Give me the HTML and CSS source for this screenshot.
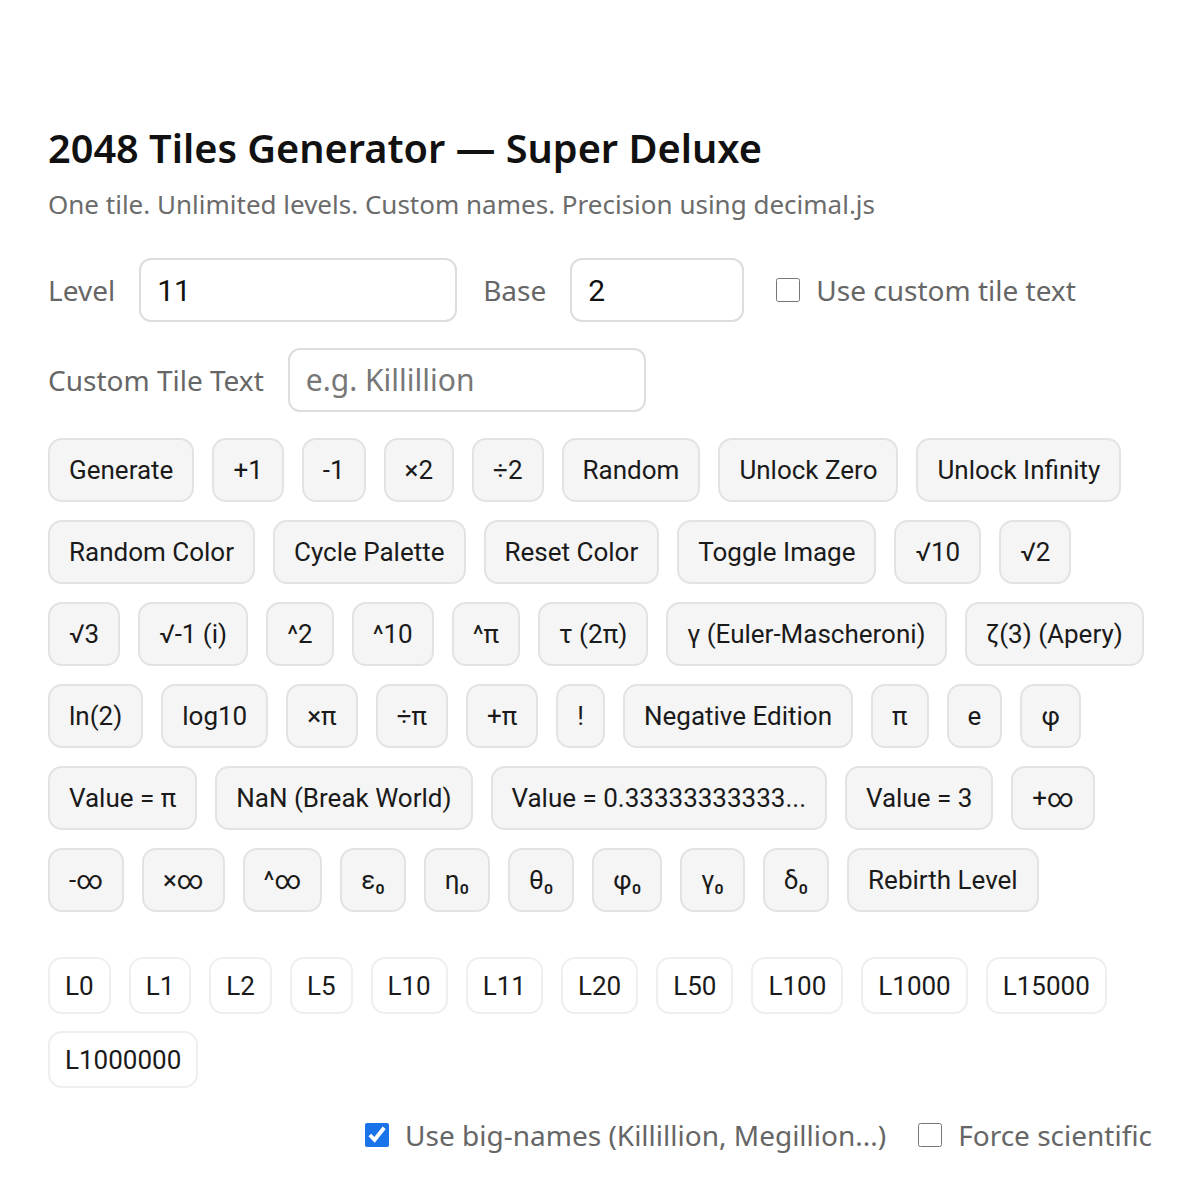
FILE: index.html
```html
<!DOCTYPE html>
<html lang="en">
<head>
    <meta charset="UTF-8">
    <meta name="viewport" content="width=device-width, initial-scale=1.0">
    <title>2048 Tiles Generator — Super Deluxe</title>
    <link rel="stylesheet" href="styles.css">
</head>
<body>
    <div class="app">
        <h1>2048 Tiles Generator — Super Deluxe</h1>
        <p class="subtitle">One tile. Unlimited levels. Custom names. Precision using decimal.js</p>

        <div class="field-row">
            <label class="label" for="level">Level</label>
            <input class="input input-level" id="level" type="text" value="11">
            <label class="label label-base" for="base">Base</label>
            <input class="input input-base" id="base" type="text" value="2">
            <label class="check check-custom"><input type="checkbox"> Use custom tile text</label>
        </div>

        <div class="field-row">
            <label class="label" for="custom">Custom Tile Text</label>
            <input class="input input-custom" id="custom" type="text" placeholder="e.g. Killillion">
        </div>

        <div class="actions">
            <div class="btn-row">
                <button class="button">Generate</button>
                <button class="button">+1</button>
                <button class="button">-1</button>
                <button class="button">×2</button>
                <button class="button">÷2</button>
                <button class="button">Random</button>
                <button class="button">Unlock Zero</button>
                <button class="button">Unlock Infinity</button>
            </div>
            <div class="btn-row">
                <button class="button">Random Color</button>
                <button class="button">Cycle Palette</button>
                <button class="button">Reset Color</button>
                <button class="button">Toggle Image</button>
                <button class="button">√10</button>
                <button class="button">√2</button>
            </div>
            <div class="btn-row">
                <button class="button">√3</button>
                <button class="button">√-1 (i)</button>
                <button class="button">^2</button>
                <button class="button">^10</button>
                <button class="button">^π</button>
                <button class="button">τ (2π)</button>
                <button class="button">γ (Euler-Mascheroni)</button>
                <button class="button">ζ(3) (Apery)</button>
            </div>
            <div class="btn-row">
                <button class="button">ln(2)</button>
                <button class="button">log10</button>
                <button class="button">×π</button>
                <button class="button">÷π</button>
                <button class="button">+π</button>
                <button class="button">!</button>
                <button class="button">Negative Edition</button>
                <button class="button">π</button>
                <button class="button">e</button>
                <button class="button">φ</button>
            </div>
            <div class="btn-row">
                <button class="button">Value = π</button>
                <button class="button">NaN (Break World)</button>
                <button class="button">Value = 0.33333333333...</button>
                <button class="button">Value = 3</button>
                <button class="button">+∞</button>
            </div>
            <div class="btn-row">
                <button class="button">-∞</button>
                <button class="button">×∞</button>
                <button class="button">^∞</button>
                <button class="button">ε₀</button>
                <button class="button">η₀</button>
                <button class="button">θ₀</button>
                <button class="button">φ₀</button>
                <button class="button">γ₀</button>
                <button class="button">δ₀</button>
                <button class="button">Rebirth Level</button>
            </div>
        </div>

        <div class="levels">
            <button class="level-btn">L0</button>
            <button class="level-btn">L1</button>
            <button class="level-btn">L2</button>
            <button class="level-btn">L5</button>
            <button class="level-btn">L10</button>
            <button class="level-btn">L11</button>
            <button class="level-btn">L20</button>
            <button class="level-btn">L50</button>
            <button class="level-btn">L100</button>
            <button class="level-btn">L1000</button>
            <button class="level-btn">L15000</button>
            <button class="level-btn">L1000000</button>
        </div>

        <div class="options">
            <label class="check"><input type="checkbox" checked> Use big-names (Killillion, Megillion...)</label>
            <label class="check"><input type="checkbox"> Force scientific</label>
        </div>
    </div>
</body>
</html>
```

FILE: styles.css
```css
body {
    font-family: 'Noto Sans', 'Open Sans', sans-serif;
    margin: 0;
    padding: 0;
    background: #fff;
    color: #111;
}
.app {
    padding: 112px 48px 40px;
}
h1 {
    font-size: 39.7px;
    font-weight: 600;
    margin: 0;
    line-height: 72px;
    color: #111;
}
.subtitle {
    color: #6b6b6b;
    font-size: 26px;
    margin: 2px 0 36px;
    line-height: 36px;
}
.field-row {
    display: flex;
    align-items: center;
    gap: 24px;
    margin-bottom: 26px;
}
.label {
    color: #666;
    font-size: 28px;
}
.label-base {
    margin-left: 2px;
}
.input {
    box-sizing: border-box;
    height: 64px;
    border: 2px solid #ddd;
    border-radius: 12px;
    padding: 0 16px;
    font-family: Roboto, sans-serif;
    font-size: 30px;
    color: #111;
    outline: none;
}
.input::placeholder {
    font-family: 'Noto Sans', sans-serif;
    color: #777;
}
.input-level { width: 318px; }
.input-base { width: 174px; }
.input-custom { width: 358px; }
.check {
    display: flex;
    align-items: center;
    gap: 16px;
    color: #666;
    font-size: 28px;
    white-space: nowrap;
}
.check-custom {
    margin-left: 8px;
}
.check input {
    width: 24px;
    height: 24px;
    margin: 0;
    accent-color: #1a73e8;
}
.actions {
    display: flex;
    flex-direction: column;
    gap: 18px;
}
.btn-row {
    display: flex;
    gap: 18px;
}
.button {
    font-family: Roboto, sans-serif;
    font-size: 26px;
    line-height: 30px;
    color: #1a1a1a;
    background: #f5f5f5;
    border: 2px solid #e3e3e3;
    border-radius: 14px;
    padding: 15px 19px;
    white-space: nowrap;
    cursor: pointer;
}
.levels {
    display: flex;
    flex-wrap: wrap;
    gap: 17px 18px;
    margin-top: 45px;
}
.level-btn {
    font-family: Roboto, sans-serif;
    font-size: 26px;
    line-height: 30px;
    color: #1a1a1a;
    background: #fff;
    border: 2px solid #efefef;
    border-radius: 14px;
    padding: 11.5px 15px;
    white-space: nowrap;
    cursor: pointer;
}
.options {
    display: flex;
    justify-content: flex-end;
    gap: 32px;
    margin-top: 28px;
}
```
